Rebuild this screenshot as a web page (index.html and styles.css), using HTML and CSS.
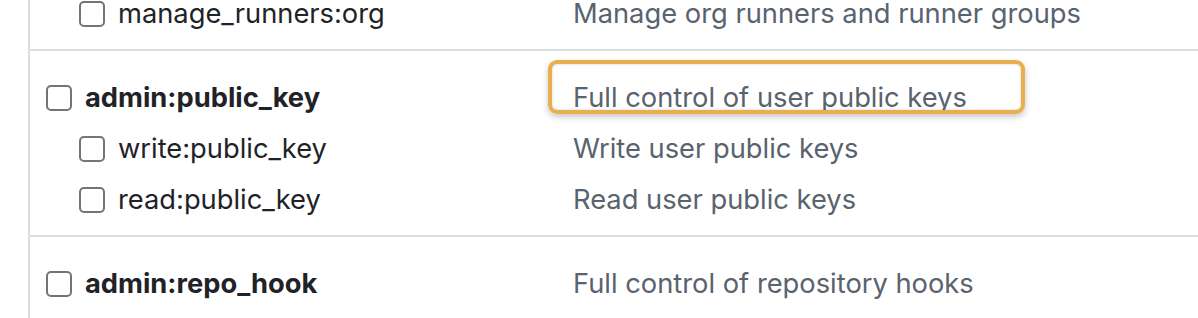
FILE: index.html
```html
<!DOCTYPE html>
<html>
<head>
<meta charset="utf-8">
<link rel="stylesheet" href="styles.css">
</head>
<body>
<div class="scopes">
  <div class="group">
    <div class="row nested">
      <label class="name"><span class="box"></span>manage_runners:org</label>
      <div class="desc">Manage org runners and runner groups</div>
    </div>
  </div>
  <div class="group">
    <div class="row">
      <label class="name top"><span class="box"></span>admin:public_key</label>
      <div class="desc"><span class="hl"></span>Full control of user public keys</div>
    </div>
    <div class="row nested">
      <label class="name"><span class="box"></span>write:public_key</label>
      <div class="desc">Write user public keys</div>
    </div>
    <div class="row nested">
      <label class="name"><span class="box"></span>read:public_key</label>
      <div class="desc">Read user public keys</div>
    </div>
  </div>
  <div class="group">
    <div class="row">
      <label class="name top"><span class="box"></span>admin:repo_hook</label>
      <div class="desc">Full control of repository hooks</div>
    </div>
  </div>
</div>
</body>
</html>
```
FILE: styles.css
```css
html, body {
  margin: 0;
  padding: 0;
  background: #ffffff;
}
body {
  font-family: Inter, "Liberation Sans", sans-serif;
  font-size: 27.3px;
  line-height: 32px;
  color: #1f2328;
  overflow: hidden;
}
.scopes {
  margin-left: 28px;
  margin-top: -33px;
  border-left: 2px solid #d8dee4;
}
.group {
  padding: 21px 0 10px;
  border-bottom: 2px solid #d8dee4;
}
.row {
  display: grid;
  grid-template-columns: 543px 1fr;
  height: 51px;
  align-items: center;
}
.name {
  display: flex;
  align-items: center;
  gap: 13px;
  padding-left: 16px;
}
.row.nested .name {
  padding-left: 49px;
}
.name.top {
  font-weight: 700;
}
.box {
  width: 22px;
  height: 22px;
  border: 2px solid #747474;
  border-radius: 5px;
  flex: none;
}
.desc {
  position: relative;
  color: #59636e;
}
.hl {
  position: absolute;
  left: -25px;
  top: calc(50% - 38px);
  width: 469px;
  height: 46px;
  border: 4px solid #e8ae50;
  border-radius: 9px;
  box-shadow: 0 3px 6px rgba(0,0,0,0.22), inset 0 0 3px rgba(0,0,0,0.18);
}
```
